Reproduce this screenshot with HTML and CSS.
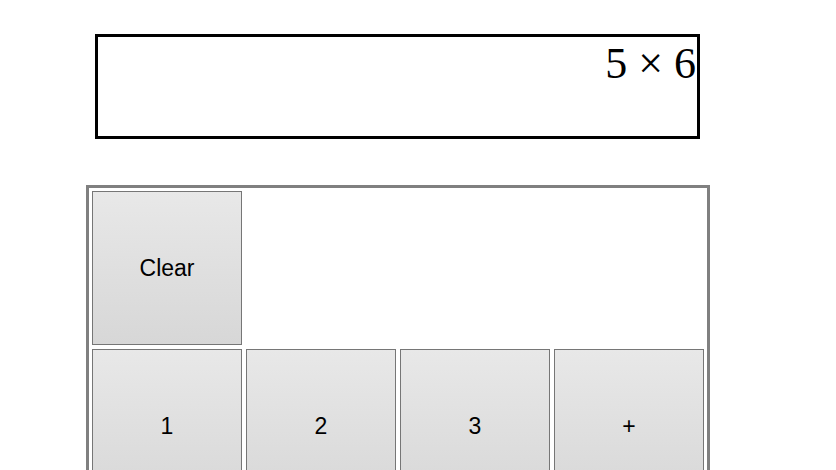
FILE: index.html
```html
<!DOCTYPE html>
<html>
<head>
<meta charset="utf-8">
<link rel="stylesheet" href="styles.css">
</head>
<body>
<div class="page">
  <div class="display">5 × 6</div>
  <div class="keypad">
    <button class="key">Clear</button>
    <div class="spacer"></div>
    <button class="key">1</button>
    <button class="key">2</button>
    <button class="key">3</button>
    <button class="key">+</button>
  </div>
</div>
</body>
</html>
```
FILE: styles.css
```css
html, body {
  margin: 0;
  padding: 0;
  background: #ffffff;
}
.page {
  padding-top: 34px;
}
.display {
  box-sizing: border-box;
  margin-left: 95px;
  width: 605px;
  height: 105px;
  border: 3px solid #000000;
  padding-top: 1px;
  padding-right: 1px;
  font-family: "Liberation Serif", "Times New Roman", serif;
  font-size: 44px;
  line-height: normal;
  text-align: right;
  color: #000000;
}
.keypad {
  margin-top: 46px;
  margin-left: 86px;
  width: 615px;
  border: 3px solid #808080;
  padding: 3px 0 3px 3px;
  box-sizing: content-box;
  display: grid;
  grid-template-columns: repeat(4, 150px);
  grid-auto-rows: 154px;
  gap: 4px;
}
.spacer {
  grid-column: span 3;
}
.key {
  margin: 0;
  padding: 0;
  border: 1px solid #767676;
  border-radius: 0;
  background: linear-gradient(#e8e8e8, #d7d7d7);
  font-family: "Liberation Sans", Arial, sans-serif;
  font-size: 23px;
  color: #000000;
}
```
